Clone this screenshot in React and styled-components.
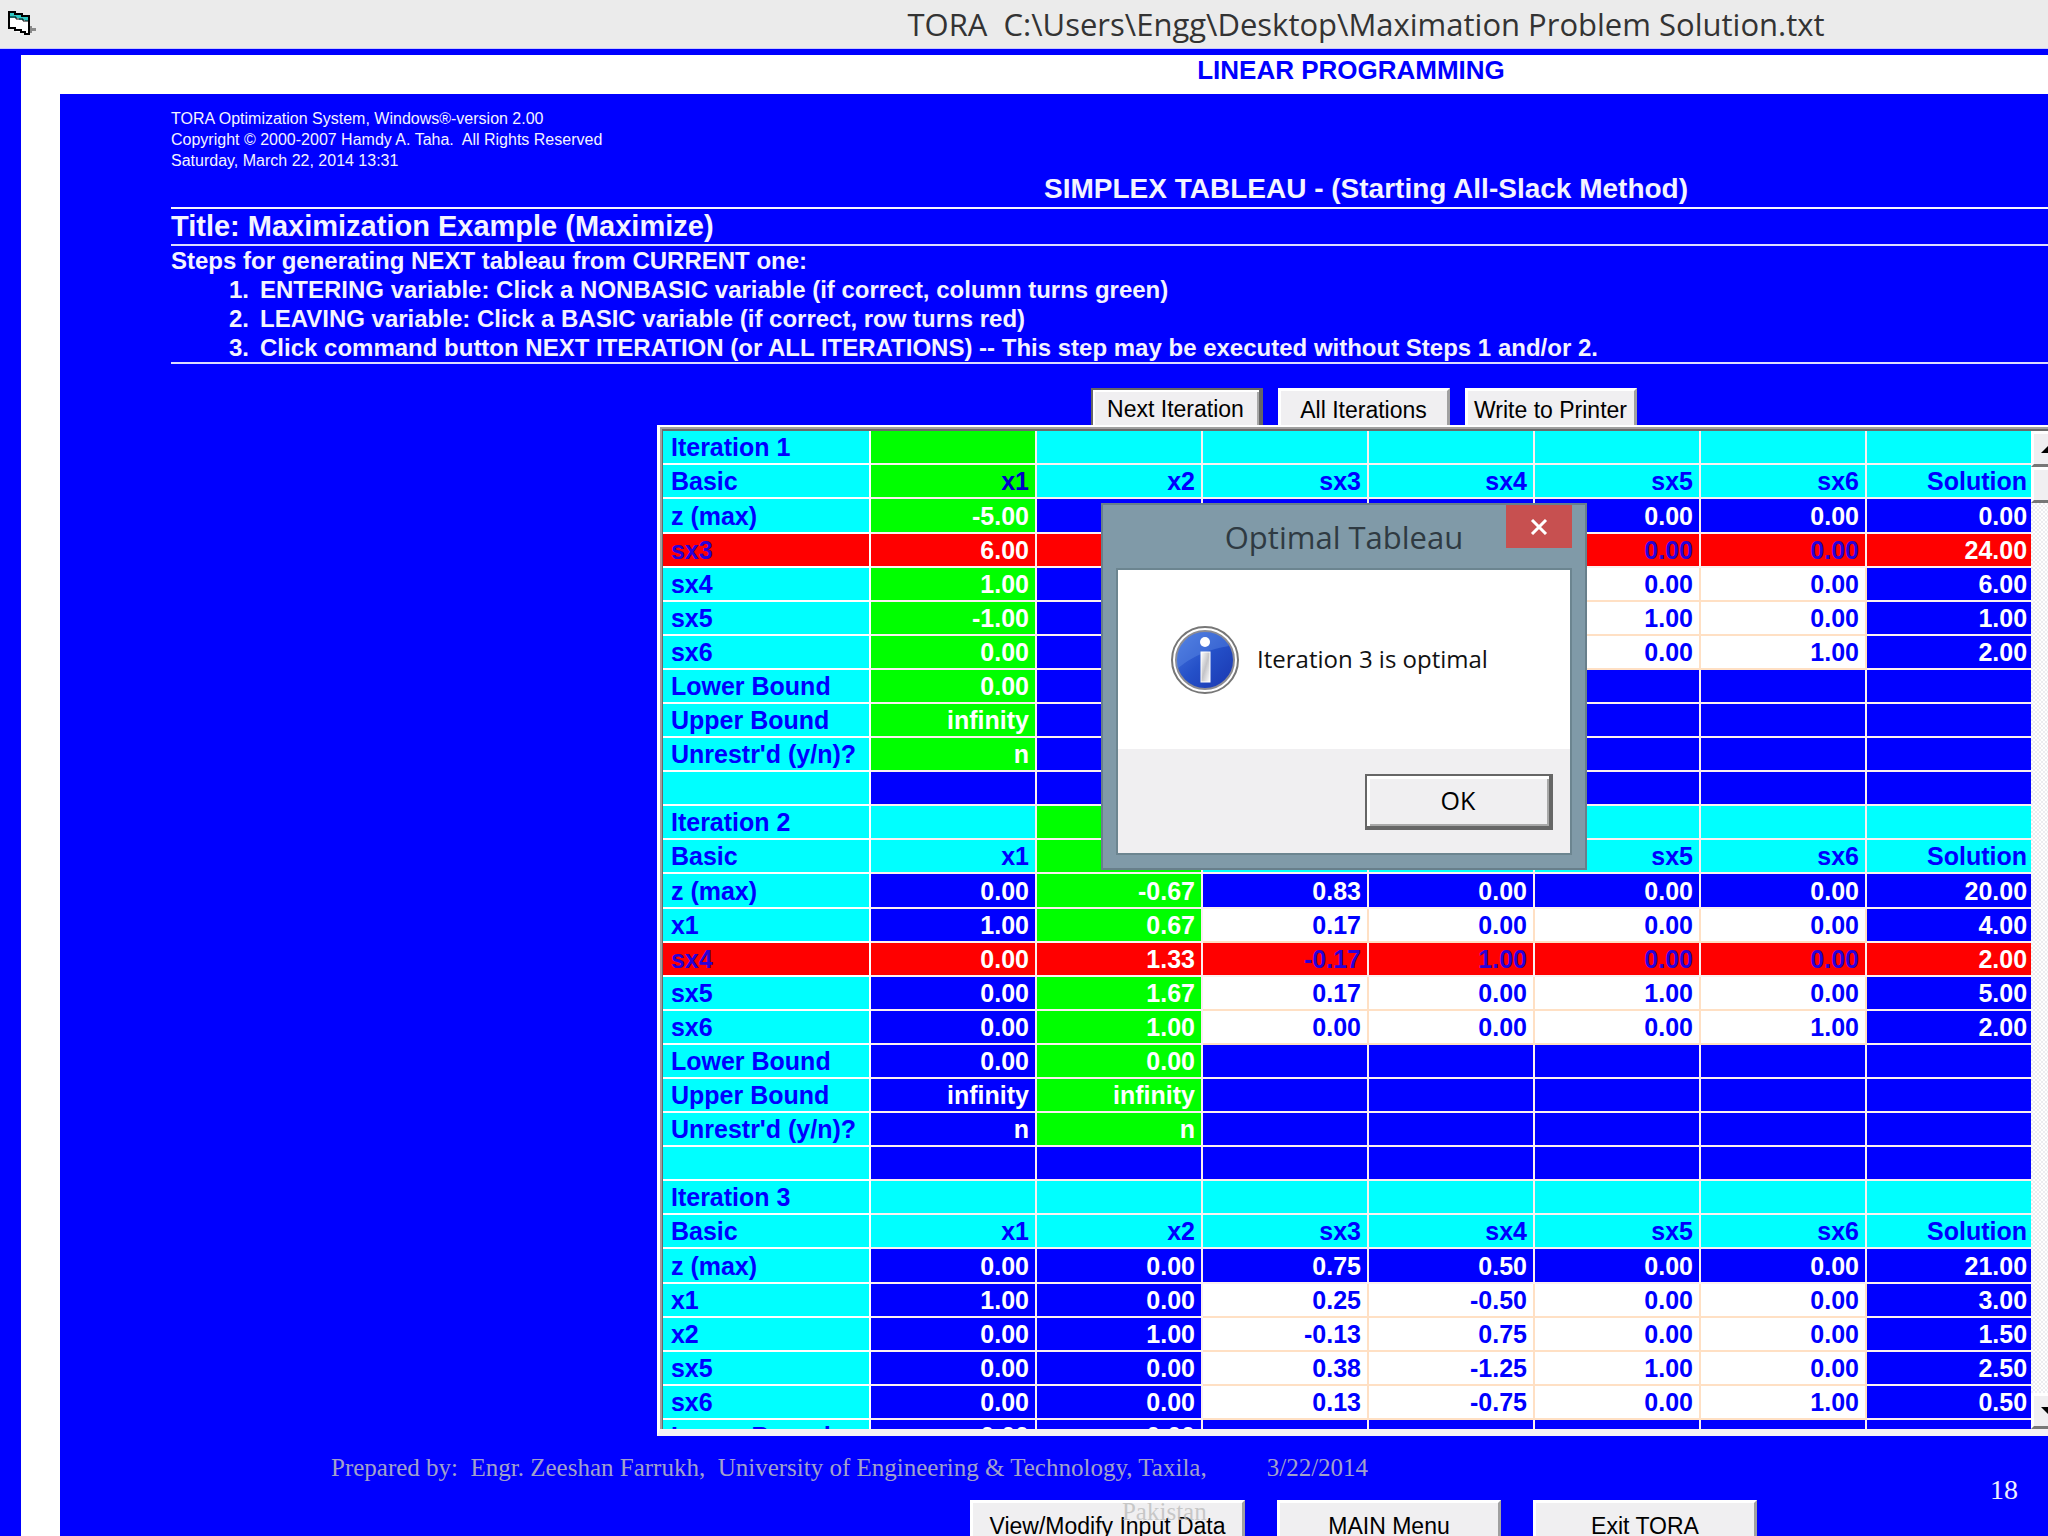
import React from 'react'
import styled, { createGlobalStyle, css } from 'styled-components'

const GlobalStyle = createGlobalStyle`
  * {
    box-sizing: border-box;
  }

  body {
    margin: 0;
    overflow: hidden;
    background: #0000ff;
    font-family: "Liberation Sans", Arial, sans-serif;
  }

  button {
    font-family: inherit;
    cursor: pointer;
  }
`;

const columns = ['x1', 'x2', 'sx3', 'sx4', 'sx5', 'sx6', 'Solution'];
const blank = ['', '', '', '', '', '', ''];

// entering = index of the green column, leaving = label of the red row
const iterations = [
  {
    name: 'Iteration 1',
    entering: 0,
    leaving: 'sx3',
    z: ['-5.00', '-4.00', '0.00', '0.00', '0.00', '0.00', '0.00'],
    rows: [
      ['sx3', '6.00', '4.00', '1.00', '0.00', '0.00', '0.00', '24.00'],
      ['sx4', '1.00', '2.00', '0.00', '1.00', '0.00', '0.00', '6.00'],
      ['sx5', '-1.00', '1.00', '0.00', '0.00', '1.00', '0.00', '1.00'],
      ['sx6', '0.00', '1.00', '0.00', '0.00', '0.00', '1.00', '2.00'],
    ],
  },
  {
    name: 'Iteration 2',
    entering: 1,
    leaving: 'sx4',
    z: ['0.00', '-0.67', '0.83', '0.00', '0.00', '0.00', '20.00'],
    rows: [
      ['x1', '1.00', '0.67', '0.17', '0.00', '0.00', '0.00', '4.00'],
      ['sx4', '0.00', '1.33', '-0.17', '1.00', '0.00', '0.00', '2.00'],
      ['sx5', '0.00', '1.67', '0.17', '0.00', '1.00', '0.00', '5.00'],
      ['sx6', '0.00', '1.00', '0.00', '0.00', '0.00', '1.00', '2.00'],
    ],
  },
  {
    name: 'Iteration 3',
    entering: -1,
    leaving: '',
    z: ['0.00', '0.00', '0.75', '0.50', '0.00', '0.00', '21.00'],
    rows: [
      ['x1', '1.00', '0.00', '0.25', '-0.50', '0.00', '0.00', '3.00'],
      ['x2', '0.00', '1.00', '-0.13', '0.75', '0.00', '0.00', '1.50'],
      ['sx5', '0.00', '0.00', '0.38', '-1.25', '1.00', '0.00', '2.50'],
      ['sx6', '0.00', '0.00', '0.13', '-0.75', '0.00', '1.00', '0.50'],
    ],
  },
];

const bounds = [
  ['Lower Bound', '0.00', '0.00', '', '', '', '', ''],
  ['Upper Bound', 'infinity', 'infinity', '', '', '', '', ''],
  ["Unrestr'd (y/n)?", 'n', 'n', '', '', '', '', ''],
];

function Row({ label, values, tone, entering, leaving, tall }) {
  const toneOf = (i) => {
    if (leaving) return i > 1 && i < 6 ? 'redBlue' : 'red';
    if (i === entering) return tone === 'cyan' ? 'greenHead' : 'green';
    if (tone === 'body') return i > 1 && i < 6 ? 'white' : 'blue';
    return tone;
  };

  return (
    <tr>
      <HeadCell scope="row" $tone={leaving ? 'redBlue' : 'cyan'} $tall={tall}>{label}</HeadCell>
      {values.map((v, i) => (
        <Cell key={i} $tone={toneOf(i)}>{v}</Cell>
      ))}
    </tr>
  )
}

function Iteration({ data }) {
  const { name, entering, leaving, z, rows } = data;

  return (
    <tbody>
      <Row label={name} values={blank} tone="cyan" entering={entering} />
      <Row label="Basic" values={columns} tone="cyan" entering={entering} />
      <Row label="z (max)" values={z} tone="blue" entering={entering} tall />
      {rows.map(([label, ...values]) => (
        <Row key={label} label={label} values={values} tone="body" entering={entering} leaving={label === leaving} />
      ))}
      {bounds.map(([label, ...values]) => (
        <Row key={label} label={label} values={values} tone="blue" entering={entering} />
      ))}
      <Row label="" values={blank} tone="blue" />
    </tbody>
  )
}

function FormIcon() {
  return (
    <svg width="30" height="26" viewBox="0 0 30 26" aria-hidden="true">
      <path d="M22 15h2v2h4v3h-4v2h-2z" fill="#8a8a8a" />
      <path d="M1 2h6v2h7v2h7v18h-4v-3H8v-3H1z" fill="#fff" />
      <path d="M2 2h5v2h7v2h7v4h-4V9h-6V7H2z" fill="#2fc9c4" />
      <path d="M2 6h6v2h7v2h6" fill="none" stroke="#000" strokeWidth="1" />
      <path d="M1 1h6v2h7v2h7v18h-4v-2h-4v-2H7v-2H1z" fill="none" stroke="#000" strokeWidth="2" />
    </svg>
  )
}

function InfoIcon() {
  return (
    <svg width="70" height="70" viewBox="0 0 70 70" aria-hidden="true">
      <defs>
        <linearGradient id="ball" x1="0" y1="0" x2="1" y2="1">
          <stop offset="0" stopColor="#4a78e0" />
          <stop offset="0.5" stopColor="#2450c8" />
          <stop offset="1" stopColor="#1a36b0" />
        </linearGradient>
        <linearGradient id="stem" x1="0" y1="0" x2="1" y2="1">
          <stop offset="0" stopColor="#fff" />
          <stop offset="0.5" stopColor="#c4c4c8" />
          <stop offset="1" stopColor="#fff" />
        </linearGradient>
      </defs>
      <circle cx="35" cy="35" r="33" fill="#fff" stroke="#777" strokeWidth="2" />
      <circle cx="35" cy="35" r="29" fill="url(#ball)" stroke="#8c8c94" strokeWidth="2" />
      <path d="M7 44C3 22 18 7 35 7c11 0 20 6 24 14C46 23 26 28 7 44z" fill="#6b97ea" opacity="0.35" />
      <circle cx="35" cy="17" r="5" fill="#fff" />
      <rect x="31" y="27" width="9" height="30" fill="url(#stem)" stroke="#fff" strokeWidth="1" />
    </svg>
  )
}

function App() {
  return (
    <>
      <GlobalStyle />
      <Screen>
        <TitleBar>
          <FormIcon />
          <WindowTitle>{'TORA  C:\\Users\\Engg\\Desktop\\Maximation Problem Solution.txt'}</WindowTitle>
        </TitleBar>

        <Panel>
          <PanelTitle>LINEAR PROGRAMMING</PanelTitle>

          <Workspace>
            <Header>
              <Meta>
                TORA Optimization System, Windows®-version 2.00<br />
                {'Copyright © 2000-2007 Hamdy A. Taha.  All Rights Reserved'}<br />
                Saturday, March 22, 2014 13:31
              </Meta>
              <Method>SIMPLEX TABLEAU - (Starting All-Slack Method)</Method>
              <ProblemTitle>Title: Maximization Example (Maximize)</ProblemTitle>
              <Steps>
                Steps for generating NEXT tableau from CURRENT one:
                <ol>
                  <li><span>1.</span>ENTERING variable: Click a NONBASIC variable (if correct, column turns green)</li>
                  <li><span>2.</span>LEAVING variable: Click a BASIC variable (if correct, row turns red)</li>
                  <li><span>3.</span>Click command button NEXT ITERATION (or ALL ITERATIONS) -- This step may be executed without Steps 1 and/or 2.</li>
                </ol>
              </Steps>
            </Header>

            <Tabs>
              <TabButton type="button" $default>Next Iteration</TabButton>
              <TabButton type="button">All Iterations</TabButton>
              <TabButton type="button">Write to Printer</TabButton>
            </Tabs>

            <GridFrame>
              <GridView>
                <Tableau>
                  <colgroup>
                    <FirstCol />
                    {columns.slice(0, 6).map((c) => <ValueCol key={c} />)}
                    <col />
                  </colgroup>
                  {iterations.map((it) => <Iteration key={it.name} data={it} />)}
                </Tableau>
              </GridView>
              <ScrollBar>
                <ScrollButton type="button" aria-label="Scroll up">
                  <svg width="16" height="8" viewBox="0 0 16 8"><path d="M0 8l8-8 8 8z" /></svg>
                </ScrollButton>
                <ScrollButton type="button" aria-label="Scroll position" />
                <Track />
                <ScrollButton type="button" aria-label="Scroll down">
                  <svg width="16" height="8" viewBox="0 0 16 8"><path d="M0 0l8 8 8-8z" /></svg>
                </ScrollButton>
              </ScrollBar>
            </GridFrame>

            <Commands>
              <CommandButton type="button" $wide>View/Modify Input Data</CommandButton>
              <CommandButton type="button">MAIN Menu</CommandButton>
              <CommandButton type="button">Exit TORA</CommandButton>
            </Commands>
          </Workspace>
        </Panel>
      </Screen>

      <Dialog role="dialog" aria-labelledby="dialog-title">
        <DialogBar>
          <DialogTitle id="dialog-title">Optimal Tableau</DialogTitle>
          <CloseButton type="button" aria-label="Close">
            <svg width="18" height="16" viewBox="0 0 18 16"><path d="M2 1l14 14M16 1L2 15" stroke="#fff" strokeWidth="3" /></svg>
          </CloseButton>
        </DialogBar>
        <DialogBody>
          <Message>
            <InfoIcon />
            <MessageText>Iteration 3 is optimal</MessageText>
          </Message>
          <DialogFooter>
            <OkButton type="button">OK</OkButton>
          </DialogFooter>
        </DialogBody>
      </Dialog>

      <SlideFooter>
        <Credit>
          {'Prepared by:  Engr. Zeeshan Farrukh,  University of Engineering & Technology, Taxila,'}<br />
          Pakistan
        </Credit>
        <SlideDate>3/22/2014</SlideDate>
        <PageNumber>18</PageNumber>
      </SlideFooter>
    </>
  )
}

export default App

/* the maximized window is wider than the viewport and runs off its right edge */
const Screen = styled.div`
  display: flex;
  flex-direction: column;
  width: 133.4vw;
  height: 100vh;
  overflow: hidden;
`;

const TitleBar = styled.header`
  display: flex;
  align-items: center;
  flex: none;
  height: 49px;
  padding: 0 38px 0 8px;
  background: #ebebeb;
  border-bottom: 1px solid #c8c8ff;
`;

const WindowTitle = styled.div`
  flex: 1;
  text-align: center;
  white-space: pre;
  color: #333;
  font-family: "Open Sans", "Noto Sans", sans-serif;
  font-size: 31px;
  line-height: 48px;
`;

const Panel = styled.main`
  display: flex;
  flex-direction: column;
  flex: 1;
  min-height: 0;
  margin: 6px 21px 0;
  padding: 0 39px;
  background: #fff;
`;

const PanelTitle = styled.h1`
  flex: none;
  margin: 0;
  padding-right: 30px;
  text-align: center;
  color: #0000ff;
  font-size: 26px;
  line-height: 30px;
  height: 39px;
`;

const Workspace = styled.div`
  display: flex;
  flex-direction: column;
  flex: 1;
  min-height: 0;
  background: #0000ff;
  padding-right: 5px;
`;

const Header = styled.section`
  flex: none;
  margin-left: 111px;
  margin-right: 106px;
  color: #f4f4ff;
`;

const Meta = styled.p`
  margin: 0;
  padding-top: 14px;
  white-space: pre-wrap;
  font-size: 16px;
  line-height: 21px;
`;

const Method = styled.h2`
  margin: 0;
  border-bottom: 2px solid #f4f4ff;
  text-align: center;
  font-size: 28px;
  line-height: 36px;
`;

const ProblemTitle = styled.h2`
  margin: 0;
  border-bottom: 2px solid #dcdcff;
  font-size: 29px;
  line-height: 35px;
`;

const Steps = styled.div`
  border-bottom: 2px solid #dcdcff;
  font-size: 24px;
  font-weight: bold;
  line-height: 29px;

  ol {
    list-style: none;
    margin: 0;
    padding-left: 58px;
  }

  span {
    display: inline-block;
    width: 31px;
  }
`;

const Tabs = styled.div`
  display: flex;
  flex: none;
  justify-content: center;
  gap: 15px;
  padding-top: 24px;
`;

const raised = css`
  color: #000;
  background: #f0eff1;
  border: 3px solid;
  border-color: #fff #a0a0a0 #a0a0a0 #fff;
  border-radius: 0;
`;

const TabButton = styled.button`
  ${raised}
  width: 172px;
  height: 37px;
  padding: 3px 0 0;
  border-bottom: 0;
  font-size: 23px;
  line-height: 28px;
  ${({ $default }) => $default && css`
    border-color: #666;
    border-width: 2px 4px 0 2px;
    box-shadow: inset 2px 2px 0 #fff, inset -2px 0 0 #a8a8a8;
  `}
`;

const GridFrame = styled.div`
  display: flex;
  flex: 1;
  align-self: center;
  min-height: 0;
  width: 69vw;
  border: 3px solid #fff;
  border-top-width: 2px;
  border-bottom: 7px solid #f6f2f6;
  background: #696969;
  padding: 4px 0 0 3px;
  box-shadow: inset 2px 2px 0 #a0a0a0;
`;

const GridView = styled.div`
  flex: 1;
  min-width: 0;
  overflow: hidden;
`;

const Tableau = styled.table`
  width: 100%;
  table-layout: fixed;
  border-collapse: separate;
  border-spacing: 0;
  color: #fff;
  font-size: 25px;
  line-height: 32px;
`;

const FirstCol = styled.col`
  width: 208px;
`;

const ValueCol = styled.col`
  width: 166px;
`;

const tones = {
  cyan: css`background: #00ffff; color: #0000ff;`,
  green: css`background: #00ff00;`,
  greenHead: css`background: #00ff00; color: #0000c8;`,
  red: css`background: #ff0000;`,
  redBlue: css`background: #ff0000; color: #2a00d8;`,
  blue: css`background: #0000ff;`,
  white: css`background: #fff; color: #0000ff; border-color: #ffe0c4;`,
};

const Cell = styled.td`
  height: 34px;
  padding: 0 6px 0 0;
  border: 0 solid #fbf0f0;
  border-right-width: 2px;
  border-bottom-width: 2px;
  font-weight: bold;
  text-align: right;
  white-space: nowrap;
  ${({ $tone }) => tones[$tone]}

  &:last-child {
    border-right-width: 0;
    padding-right: 4px;
  }
`;

const HeadCell = styled.th`
  height: ${({ $tall }) => ($tall ? '35px' : '34px')};
  padding: 0 0 0 8px;
  border: 0 solid #fff;
  border-right-width: 2px;
  border-bottom-width: 2px;
  text-align: left;
  white-space: nowrap;
  ${({ $tone }) => tones[$tone]}
`;

const ScrollBar = styled.div`
  display: flex;
  flex-direction: column;
  flex: none;
  width: 36px;
  background: #f0f0f0;
`;

const ScrollButton = styled.button`
  ${raised}
  display: flex;
  align-items: center;
  justify-content: center;
  flex: none;
  height: 36px;
  padding: 0;
  border-color: #fff #777 #777 #fff;
`;

const Track = styled.div`
  flex: 1;
  background: repeating-conic-gradient(#fff 0 25%, #ececf0 0 50%) 0 0 / 4px 4px;
`;

const Commands = styled.div`
  display: flex;
  flex: none;
  justify-content: center;
  gap: 32px;
  height: 100px;
  padding-top: 64px;
  overflow: hidden;
`;

const CommandButton = styled.button`
  ${raised}
  width: ${({ $wide }) => ($wide ? '275px' : '224px')};
  height: 52px;
  padding: 0;
  font-size: 23px;
`;

const Dialog = styled.section`
  position: absolute;
  top: 503px;
  left: 1101px;
  display: flex;
  flex-direction: column;
  width: 486px;
  padding: 0 13px 13px;
  background: #809aa8;
  border: 2px solid #687f8b;
  color: #111;
  font-family: "Open Sans", "Noto Sans", sans-serif;
`;

const DialogBar = styled.div`
  display: flex;
  align-items: flex-start;
  height: 63px;
`;

const DialogTitle = styled.h2`
  flex: 1;
  margin: 0;
  padding-left: 66px;
  text-align: center;
  color: #2f3a42;
  font-size: 31px;
  font-weight: normal;
  line-height: 64px;
`;

const CloseButton = styled.button`
  display: flex;
  align-items: center;
  justify-content: center;
  width: 66px;
  height: 43px;
  padding: 0;
  border: 0;
  background: #c75050;
`;

const DialogBody = styled.div`
  border: 2px solid #6c8590;
  background: #fff;
`;

const Message = styled.div`
  display: flex;
  align-items: center;
  gap: 17px;
  height: 179px;
  padding-left: 52px;
  font-size: 24px;
`;

const MessageText = styled.span`
  padding-bottom: 2px;
`;

const DialogFooter = styled.div`
  display: flex;
  justify-content: flex-end;
  height: 104px;
  padding: 25px 17px 0 0;
  background: #f0eff1;
`;

const OkButton = styled.button`
  ${raised}
  width: 188px;
  height: 56px;
  padding: 0 0 2px;
  border-color: #666;
  border-width: 2px 4px 4px 2px;
  box-shadow: inset 3px 3px 0 #fff, inset -2px -2px 0 #a8a8a8;
  font-size: 25px;
`;

/* footer of the slide, printed over the window */
const SlideFooter = styled.footer`
  position: absolute;
  left: 331px;
  right: 30px;
  bottom: 2px;
  display: flex;
  align-items: flex-start;
  color: rgba(192, 192, 192, 0.85);
  font-family: "Liberation Serif", "Times New Roman", serif;
  font-size: 25px;
  line-height: 44px;
  pointer-events: none;
`;

const Credit = styled.p`
  margin: 0;
  text-align: right;
  white-space: pre;
`;

const SlideDate = styled.span`
  margin-left: 60px;
`;

const PageNumber = styled.span`
  margin-left: auto;
  align-self: center;
  color: #f0f0ff;
  font-size: 28px;
`;
